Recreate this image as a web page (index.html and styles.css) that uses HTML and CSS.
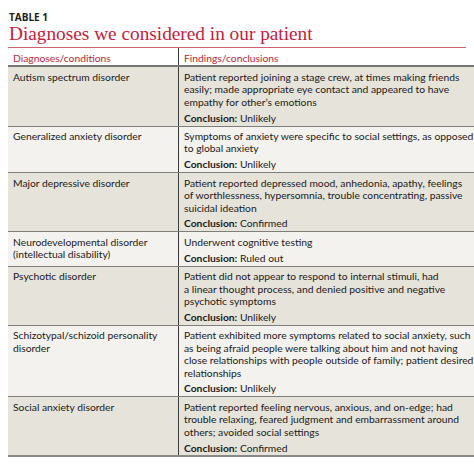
FILE: index.html
```html
<!DOCTYPE html>
<html>
<head>
<meta charset="utf-8">
<link rel="stylesheet" href="styles.css">
</head>
<body>
<div class="page">
  <div class="label">TABLE 1</div>
  <h1 class="title">Diagnoses we considered in our patient</h1>
  <table class="dx">
    <thead>
      <tr><th class="c1">Diagnoses/conditions</th><th class="c2">Findings/conclusions</th></tr>
    </thead>
    <tbody>
      <tr class="dark">
        <td class="c1">Autism spectrum disorder</td>
        <td class="c2"><p>Patient reported joining a stage crew, at times making friends<br>easily; made appropriate eye contact and appeared to have<br>empathy for other’s emotions</p><p class="conc"><b>Conclusion:</b> Unlikely</p></td>
      </tr>
      <tr class="light">
        <td class="c1">Generalized anxiety disorder</td>
        <td class="c2"><p>Symptoms of anxiety were specific to social settings, as opposed<br>to global anxiety</p><p class="conc"><b>Conclusion:</b> Unlikely</p></td>
      </tr>
      <tr class="dark">
        <td class="c1">Major depressive disorder</td>
        <td class="c2"><p>Patient reported depressed mood, anhedonia, apathy, feelings<br>of worthlessness, hypersomnia, trouble concentrating, passive<br>suicidal ideation</p><p class="conc"><b>Conclusion:</b> Confirmed</p></td>
      </tr>
      <tr class="light">
        <td class="c1">Neurodevelopmental disorder<br>(intellectual disability)</td>
        <td class="c2"><p>Underwent cognitive testing</p><p class="conc"><b>Conclusion:</b> Ruled out</p></td>
      </tr>
      <tr class="dark">
        <td class="c1">Psychotic disorder</td>
        <td class="c2"><p>Patient did not appear to respond to internal stimuli, had<br>a linear thought process, and denied positive and negative<br>psychotic symptoms</p><p class="conc"><b>Conclusion:</b> Unlikely</p></td>
      </tr>
      <tr class="light">
        <td class="c1">Schizotypal/schizoid personality<br>disorder</td>
        <td class="c2"><p>Patient exhibited more symptoms related to social anxiety, such<br>as being afraid people were talking about him and not having<br>close relationships with people outside of family; patient desired<br>relationships</p><p class="conc"><b>Conclusion:</b> Unlikely</p></td>
      </tr>
      <tr class="dark">
        <td class="c1">Social anxiety disorder</td>
        <td class="c2"><p>Patient reported feeling nervous, anxious, and on-edge; had<br>trouble relaxing, feared judgment and embarrassment around<br>others; avoided social settings</p><p class="conc"><b>Conclusion:</b> Confirmed</p></td>
      </tr>
    </tbody>
  </table>
</div>
</body>
</html>
```

FILE: styles.css
```css
html, body {
  margin: 0;
  padding: 0;
  background: #ffffff;
}

.page {
  padding: 11px 8px 0 8px;
  width: 458px;
  font-family: "Lato", "Open Sans", "Liberation Sans", sans-serif;
  color: #1c1a1a;
}

.label {
  font-family: "Open Sans", "Liberation Sans", sans-serif;
  font-weight: 700;
  font-size: 10px;
  line-height: 12px;
  padding-left: 1px;
  color: #1c1a1a;
}

.title {
  margin: 0;
  font-family: "Liberation Serif", "Times New Roman", serif;
  font-weight: normal;
  font-size: 19.3px;
  line-height: 22px;
  color: #c4203b;
  padding: 0 0 2px 1px;
  border-bottom: 1px solid #d0606f;
}

.dx {
  width: 458px;
  border-collapse: collapse;
  table-layout: fixed;
  font-size: 10.3px;
  line-height: 12.4px;
}

.dx .c1 {
  width: 160px;
  padding: 3.5px 5px 1.5px 5px;
  vertical-align: top;
  text-align: left;
}

.dx .c2 {
  width: 298px;
  padding: 3.5px 5px 1.5px 5px;
  vertical-align: top;
  text-align: left;
  border-left: 1px solid #3c3c3c;
}

.dx th {
  font-weight: normal;
  color: #b81f36;
  background: #ffffff;
  border-bottom: 2px solid #767676;
  padding-top: 2px;
  padding-bottom: 3px;
}

.dx td {
  border-bottom: 1px solid #7e7e7b;
  white-space: nowrap;
}

.dx tbody tr:last-child td {
  border-bottom: 2px solid #8a8a87;
}

.dark td {
  background: #e5e3da;
}

.light td {
  background: #f3f2ee;
}

.dx p {
  margin: 0;
}

.dx p.conc {
  margin-top: 3.5px;
}

.dx b {
  font-weight: 700;
}
```
